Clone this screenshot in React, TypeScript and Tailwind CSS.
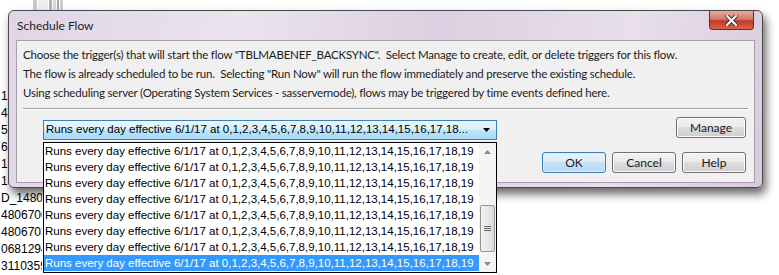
import React from "react";

const ROW_TEXT = "Runs every day effective 6/1/17 at 0,1,2,3,4,5,6,7,8,9,10,11,12,13,14,15,16,17,18,19";

// rows of the window lying behind the dialog; only their left ends show
const BG_ROWS = [
  { t: "14806", w: "w-[8px]" },
  { t: "4806", w: "w-[8px]" },
  { t: "5906", w: "w-[8px]" },
  { t: "6006", w: "w-[8px]" },
  { t: "1480", w: "w-[8px]" },
  { t: "1480", w: "w-[8px]" },
  { t: "D_14806700", w: "w-[41px]" },
  { t: "48067003", w: "w-[41px]" },
  { t: "48067031", w: "w-[41px]" },
  { t: "06812945", w: "w-[41px]" },
  { t: "31103590", w: "w-[41px]" },
];

function WinButton({ label, primary = false, className = "" }: { label: string; primary?: boolean; className?: string }) {
  return (
    <div
      className={
        "flex h-[21px] items-center justify-center rounded-[3px] border text-[12px] text-[#1b1b1b] " +
        (primary
          ? "border-[#3c7fb1] bg-[linear-gradient(#eaf3fb_0%,#dcecf8_45%,#c8e1f4_50%,#bcd9f0_100%)] shadow-[inset_0_0_0_1px_#d9ecf9] "
          : "border-[#707070] bg-[linear-gradient(#f2f2f2_0%,#ebebeb_45%,#dddddd_50%,#cfcfcf_100%)] shadow-[inset_0_0_0_1px_#fcfcfc] ") +
        className
      }
    >
      {label}
    </div>
  );
}

function ScrollArrow({ up }: { up: boolean }) {
  return (
    <svg width="7" height="4" viewBox="0 0 7 4">
      <path d={up ? "M0 4 L3.5 0 L7 4 Z" : "M0 0 L3.5 4 L7 0 Z"} fill="#8a8a8a" />
    </svg>
  );
}

export default function App() {
  return (
    <div className="relative h-[275px] w-[779px] overflow-hidden bg-white font-['Lato',sans-serif]">
      {/* background window behind the dialog */}
      <div className="absolute left-[33px] top-0 flex h-[12px] gap-[1px]">
        <div className="w-[4px] bg-[#c9c9c9]" />
        <div className="w-[10px] bg-[#ededed]" />
        <div className="w-[3px] bg-[#b5b5b5]" />
        <div className="w-[3px] bg-[#d8d8d8]" />
        <div className="w-[2px] bg-[#a8a8a8]" />
        <div className="w-[3px] bg-[#cfcfcf]" />
      </div>
      <div className="absolute left-[1px] top-[88px] flex flex-col font-['Liberation_Sans',sans-serif] text-[12px] leading-[17px] text-black">
        {BG_ROWS.map((r, i) => (
          <div key={i} className={"overflow-hidden whitespace-nowrap " + r.w}>
            {r.t}
          </div>
        ))}
      </div>

      {/* dialog */}
      <div className="absolute left-[8px] top-[10px] flex h-[178px] w-[755px] flex-col rounded-[6px] border border-[#4a4a4a] bg-[linear-gradient(100deg,#e0d5e5_0%,#ebe3ee_30%,#dccfe1_55%,#e8dfeb_80%,#d8cbdd_100%)] shadow-[3px_6px_10px_rgba(0,0,0,0.6)]">
        <div className="flex h-[29px] items-start justify-between">
          <span className="pl-[8px] pt-[6px] text-[12px] text-[#1e1e1e]">Schedule Flow</span>
          <div className="mr-[8px] flex h-[19px] w-[45px] items-center justify-center rounded-b-[4px] border border-t-0 border-[#6b2a22] bg-[linear-gradient(#e9a99c_0%,#d47a6a_45%,#c23a22_55%,#d7644a_100%)]">
            <svg width="13" height="11" viewBox="0 0 13 11">
              <path d="M2 1 L11 10 M11 1 L2 10" stroke="#3b3b3b" strokeWidth="4" strokeLinecap="square" />
              <path d="M2 1 L11 10 M11 1 L2 10" stroke="#ffffff" strokeWidth="2" strokeLinecap="square" />
            </svg>
          </div>
        </div>

        <div className="mx-[7px] flex h-[143px] flex-col border border-[#a79dab] bg-[#f0f0f0]">
          <div className="flex flex-col pl-[6px] pt-[4px] text-[11.5px] leading-[19px] tracking-[-0.2px] text-[#1b1b1b]">
            <span className="whitespace-pre">
              Choose the trigger(s) that will start the flow "TBLMABENEF_BACKSYNC".  Select Manage to create, edit, or delete triggers for this flow.
            </span>
            <span className="whitespace-pre">
              The flow is already scheduled to be run.  Selecting "Run Now" will run the flow immediately and preserve the existing schedule.
            </span>
            <span className="whitespace-pre">
              Using scheduling server (Operating System Services - sasservernode), flows may be triggered by time events defined here.
            </span>
          </div>

          <div className="mx-[6px] mt-[6px] border-t border-b border-t-[#a0a0a0] border-b-white" />

          <div className="mt-[7px] flex items-start justify-between pl-[26px] pr-[8px]">
            <div className="mt-[3px] flex h-[20px] w-[454px] items-center justify-between border border-[#3c7fb1] bg-[linear-gradient(#eaf6fd_0%,#d9f0fc_45%,#bee6fd_50%,#a7d9f5_100%)] pl-[2px] pr-[6px]">
              <span className="font-['Liberation_Sans',sans-serif] text-[11.5px] text-black">
                Runs every day effective 6/1/17 at 0,1,2,3,4,5,6,7,8,9,10,11,12,13,14,15,16,17,18...
              </span>
              <svg width="7" height="4" viewBox="0 0 7 4">
                <path d="M0 0 L3.5 4 L7 0 Z" fill="#000" />
              </svg>
            </div>
            <WinButton label="Manage" className="w-[70px]" />
          </div>

          <div className="mt-[12px] flex justify-end gap-[6px] pr-[8px]">
            <WinButton label="OK" primary className="w-[64px]" />
            <WinButton label="Cancel" className="w-[64px]" />
            <WinButton label="Help" className="w-[64px]" />
          </div>
        </div>
      </div>

      {/* open dropdown list */}
      <div className="absolute left-[43px] top-[142px] flex h-[131px] w-[454px] border border-black bg-white font-['Liberation_Sans',sans-serif] text-[11.5px] leading-[16px]">
        <div className="flex min-w-0 flex-1 flex-col overflow-hidden">
          {Array.from({ length: 8 }).map((_, i) => (
            <div
              key={i}
              className={
                "h-[16px] whitespace-nowrap pl-[1px] " + (i === 7 ? "bg-[#3399ff] text-white" : "text-black")
              }
            >
              {ROW_TEXT}
            </div>
          ))}
        </div>
        <div className="flex w-[17px] flex-col items-center bg-[#f4f4f4]">
          <div className="flex h-[17px] w-full items-center justify-center">
            <ScrollArrow up />
          </div>
          <div className="flex-1" />
          <div className="mb-[3px] flex h-[47px] w-[15px] items-center justify-center rounded-[2px] border border-[#959595] bg-[linear-gradient(90deg,#f3f3f3_0%,#e8e8e8_50%,#d9d9d9_100%)]">
            <svg width="7" height="6" viewBox="0 0 7 6">
              <path d="M0 0.5 H7 M0 2.5 H7 M0 4.5 H7" stroke="#6a6a6a" strokeWidth="1" />
            </svg>
          </div>
          <div className="flex h-[17px] w-full items-center justify-center">
            <ScrollArrow up={false} />
          </div>
        </div>
      </div>
    </div>
  );
}
